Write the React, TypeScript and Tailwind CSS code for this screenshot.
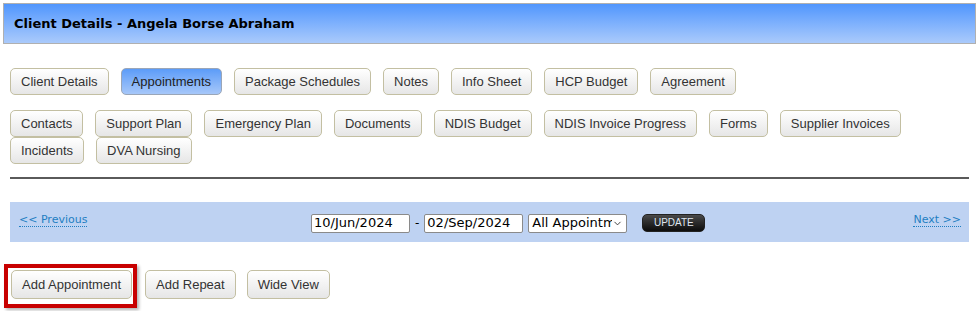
import { ChevronDown } from "lucide-react";

const ROW1 = ["Client Details", "Appointments", "Package Schedules", "Notes", "Info Sheet", "HCP Budget", "Agreement"];
const ROW2 = [
  "Contacts",
  "Support Plan",
  "Emergency Plan",
  "Documents",
  "NDIS Budget",
  "NDIS Invoice Progress",
  "Forms",
  "Supplier Invoices",
  "Incidents",
  "DVA Nursing",
];

function TabButton({ label, active = false }: { label: string; active?: boolean }) {
  return (
    <button
      className={
        active
          ? "h-[27px] px-[10px] rounded-[5px] border border-[#9aa6b8] bg-gradient-to-b from-[#5c9cf8] to-[#a6c7f9] text-[13px] text-[#222] font-['Liberation_Sans',Arial,sans-serif] leading-none"
          : "h-[27px] px-[10px] rounded-[5px] border border-[#c3bfa2] bg-gradient-to-b from-[#ffffff] to-[#e6e6e6] text-[13px] text-[#333] font-['Liberation_Sans',Arial,sans-serif] leading-none"
      }
    >
      {label}
    </button>
  );
}

function ActionButton({ label }: { label: string }) {
  return (
    <button className="h-[29px] px-[10px] rounded-[5px] border border-[#c3bfa2] bg-gradient-to-b from-[#ffffff] to-[#e6e6e6] text-[13px] text-[#333] font-['Liberation_Sans',Arial,sans-serif] leading-none">
      {label}
    </button>
  );
}

export default function App() {
  return (
    <div className="w-[979px] h-[311px] bg-white overflow-hidden">
      <div className="p-[3px]">
        <div className="h-[41px] border border-[#b0b0b0] bg-gradient-to-b from-[#5096fd] to-[#aacafb] flex items-center pl-[10px]">
          <h1 className="font-['DejaVu_Sans',Verdana,sans-serif] font-bold text-[13px] text-black">
            Client Details - Angela Borse Abraham
          </h1>
        </div>
      </div>

      <div className="px-[10px] w-[968px]">
        <div className="flex flex-wrap gap-x-[12px] mt-[21px]">
          {ROW1.map((l) => (
            <TabButton key={l} label={l} active={l === "Appointments"} />
          ))}
        </div>
        <div className="flex flex-wrap gap-x-[12px] mt-[15px]">
          {ROW2.map((l) => (
            <TabButton key={l} label={l} />
          ))}
        </div>

        <div className="mt-[13px] h-[2px] bg-[#5a5a5a] w-[959px]" />

        <div className="mt-[23px] h-[40px] w-[959px] bg-[#bed2f2] flex items-center pl-[9px] pr-[8px] font-['DejaVu_Sans',Verdana,sans-serif] text-[11px]">
          <div className="w-[292px] shrink-0 -mt-[3px]">
            <a className="text-[#1f7ec2] border-b border-dotted border-[#1f7ec2] leading-tight">&lt;&lt; Previous</a>
          </div>
          <div className="flex items-center gap-[5px] mt-[2px]">
            <input
              readOnly
              value="10/Jun/2024"
              className="w-[99px] h-[19px] bg-white border border-[#8a8a8a] rounded-[2px] px-[2px] text-[13px] text-black font-['DejaVu_Sans',Verdana,sans-serif] outline-none"
            />
            <span className="text-black text-[12px]">-</span>
            <input
              readOnly
              value="02/Sep/2024"
              className="w-[99px] h-[19px] bg-white border border-[#8a8a8a] rounded-[2px] px-[2px] text-[13px] text-black font-['DejaVu_Sans',Verdana,sans-serif] outline-none"
            />
            <div className="w-[99px] h-[19px] bg-white border border-[#8a8a8a] rounded-[2px] flex items-center pl-[3px] pr-[3px] overflow-hidden">
              <span className="flex-1 whitespace-nowrap overflow-hidden text-[13px] text-black">All Appointments</span>
              <ChevronDown size={11} strokeWidth={2} className="text-[#333] shrink-0" />
            </div>
            <button className="ml-[10px] w-[63px] h-[18px] rounded-[5px] bg-gradient-to-b from-[#4a4a4a] to-[#0d0d0d] border border-[#222] text-[10px] text-[#dfe6f0] font-['Liberation_Sans',Arial,sans-serif] leading-none">
              UPDATE
            </button>
          </div>
          <div className="ml-auto -mt-[3px]">
            <a className="text-[#1f7ec2] border-b border-dotted border-[#1f7ec2] leading-tight">Next &gt;&gt;</a>
          </div>
        </div>

        <div className="mt-[22px] flex items-start -ml-[6px]">
          <div className="border-4 border-[#c80000] pl-[3px] pr-[1px] pt-[2px] pb-[5px] shadow-[2px_2px_3px_rgba(0,0,0,0.3)]">
            <ActionButton label="Add Appointment" />
          </div>
          <div className="ml-[8px] pt-[6px] flex gap-[11px]">
            <ActionButton label="Add Repeat" />
            <ActionButton label="Wide View" />
          </div>
        </div>
      </div>
    </div>
  );
}
